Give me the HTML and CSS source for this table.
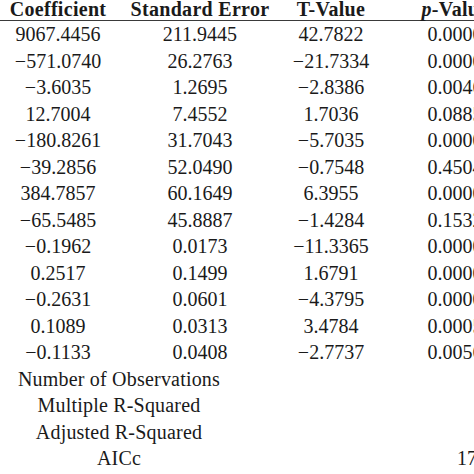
FILE: index.html
```html
<!DOCTYPE html>
<html>
<head>
<meta charset="utf-8">
<link rel="stylesheet" href="styles.css">
</head>
<body>
<div class="table">
  <div class="head">Coefficient</div>
  <div class="head">Standard Error</div>
  <div class="head">T-Value</div>
  <div class="head"><i>p</i>-Value</div>

  <div class="cell">9067.4456</div><div class="cell">211.9445</div><div class="cell">42.7822</div><div class="cell">0.0000</div>
  <div class="cell">−571.0740</div><div class="cell">26.2763</div><div class="cell">−21.7334</div><div class="cell">0.0000</div>
  <div class="cell">−3.6035</div><div class="cell">1.2695</div><div class="cell">−2.8386</div><div class="cell">0.0046</div>
  <div class="cell">12.7004</div><div class="cell">7.4552</div><div class="cell">1.7036</div><div class="cell">0.0885</div>
  <div class="cell">−180.8261</div><div class="cell">31.7043</div><div class="cell">−5.7035</div><div class="cell">0.0000</div>
  <div class="cell">−39.2856</div><div class="cell">52.0490</div><div class="cell">−0.7548</div><div class="cell">0.4504</div>
  <div class="cell">384.7857</div><div class="cell">60.1649</div><div class="cell">6.3955</div><div class="cell">0.0000</div>
  <div class="cell">−65.5485</div><div class="cell">45.8887</div><div class="cell">−1.4284</div><div class="cell">0.1532</div>
  <div class="cell">−0.1962</div><div class="cell">0.0173</div><div class="cell">−11.3365</div><div class="cell">0.0000</div>
  <div class="cell">0.2517</div><div class="cell">0.1499</div><div class="cell">1.6791</div><div class="cell">0.0000</div>
  <div class="cell">−0.2631</div><div class="cell">0.0601</div><div class="cell">−4.3795</div><div class="cell">0.0000</div>
  <div class="cell">0.1089</div><div class="cell">0.0313</div><div class="cell">3.4784</div><div class="cell">0.0005</div>
  <div class="cell">−0.1133</div><div class="cell">0.0408</div><div class="cell">−2.7737</div><div class="cell">0.0056</div>

  <div class="label">Number of Observations</div><div class="value"></div>
  <div class="label">Multiple R-Squared</div><div class="value"></div>
  <div class="label">Adjusted R-Squared</div><div class="value"></div>
  <div class="label">AICc</div><div class="value">17</div>
</div>
</body>
</html>
```
FILE: styles.css
```css
html, body {
  margin: 0;
  padding: 0;
  background: #ffffff;
  overflow: hidden;
}
body {
  width: 474px;
  height: 474px;
}
.table {
  display: grid;
  grid-template-columns: 116px 168px 94px 154px;
  grid-template-rows: 21px;
  grid-auto-rows: 26.5px;
  width: 532px;
  font-family: "Liberation Serif", "Times New Roman", serif;
  font-size: 20px;
  color: #1a1a1a;
}
.head {
  font-weight: bold;
  text-align: center;
  line-height: 19px;
  letter-spacing: 0.3px;
  border-bottom: 1.2px solid #3a3a3a;
  white-space: nowrap;
}
.cell {
  text-align: center;
  line-height: 27px;
  white-space: nowrap;
}
.label {
  grid-column: 1 / span 3;
  text-align: center;
  padding-right: 140px;
  line-height: 27px;
  letter-spacing: 0.2px;
  white-space: nowrap;
}
.value {
  text-align: left;
  padding-left: 79px;
  line-height: 27px;
  white-space: nowrap;
}
```
